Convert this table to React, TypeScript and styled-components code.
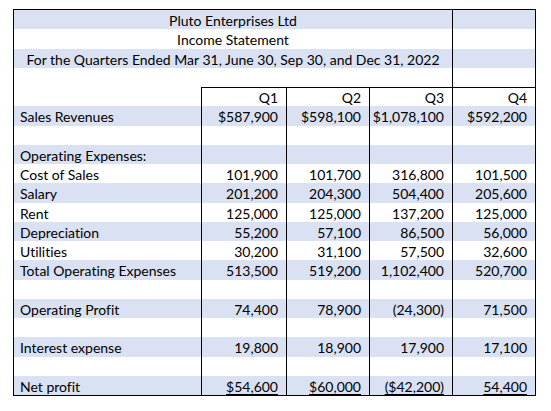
import React from "react";
import styled, { createGlobalStyle } from "styled-components";

const GlobalStyle = createGlobalStyle`
  html, body {
    margin: 0;
    padding: 0;
    background: #ffffff;
  }
  body {
    font-family: "Lato", "Open Sans", sans-serif;
    color: #000000;
  }
`;

const titles = [
  "Pluto Enterprises Ltd",
  "Income Statement",
  "For the Quarters Ended Mar 31, June 30, Sep 30, and Dec 31, 2022",
  "",
];

type Line = {
  label: string;
  values: string[];
  kind?: "head" | "total";
};

const lines: Line[] = [
  { label: "", values: ["Q1", "Q2", "Q3", "Q4"], kind: "head" },
  { label: "Sales Revenues", values: ["$587,900", "$598,100", "$1,078,100", "$592,200"] },
  { label: "", values: ["", "", "", ""] },
  { label: "Operating Expenses:", values: ["", "", "", ""] },
  { label: "Cost of Sales", values: ["101,900", "101,700", "316,800", "101,500"] },
  { label: "Salary", values: ["201,200", "204,300", "504,400", "205,600"] },
  { label: "Rent", values: ["125,000", "125,000", "137,200", "125,000"] },
  { label: "Depreciation", values: ["55,200", "57,100", "86,500", "56,000"] },
  { label: "Utilities", values: ["30,200", "31,100", "57,500", "32,600"] },
  { label: "Total Operating Expenses", values: ["513,500", "519,200", "1,102,400", "520,700"] },
  { label: "", values: ["", "", "", ""] },
  { label: "Operating Profit", values: ["74,400", "78,900", "(24,300)", "71,500"] },
  { label: "", values: ["", "", "", ""] },
  { label: "Interest expense", values: ["19,800", "18,900", "17,900", "17,100"] },
  { label: "", values: ["", "", "", ""] },
  { label: "Net profit", values: ["$54,600", "$60,000", "($42,200)", "54,400"], kind: "total" },
];

const App = () => {
  return (
    <>
      <GlobalStyle />
      <Sheet>
        {titles.map((t, i) => (
          <Row key={"t" + i} $shade={i % 2 === 0}>
            <TitleCell>{t}</TitleCell>
            <Cell $ruled />
          </Row>
        ))}
        {lines.map((line, i) => (
          <Row key={"l" + i} $shade={i % 2 === 1}>
            <Label>{line.label}</Label>
            {line.values.map((v, j) => (
              <Cell key={j} $ruled $top={line.kind === "head"}>
                {line.kind === "total" ? <Double>{v}</Double> : v}
              </Cell>
            ))}
          </Row>
        ))}
      </Sheet>
    </>
  );
};

export default App;

const Sheet = styled.div`
  width: 521px;
  margin: 9px 0 0 13px;
  border: 1px solid #000;
  display: flex;
  flex-direction: column;
`;

const Row = styled.div<{ $shade?: boolean }>`
  display: grid;
  grid-template-columns: 187px 85px 83px 83px 83px;
  height: 19.25px;
  background: ${(p) => (p.$shade ? "#d9e1f2" : "#ffffff")};
  font-size: 14px;
  line-height: 19px;
  font-feature-settings: "liga" 0;
`;

const TitleCell = styled.div`
  grid-column: span 4;
  padding-top: 1px;
  text-align: center;
  white-space: nowrap;
`;

const Label = styled.div`
  padding: 1px 0 0 6px;
  white-space: nowrap;
`;

const Cell = styled.div<{ $ruled?: boolean; $top?: boolean }>`
  box-sizing: border-box;
  border-left: ${(p) => (p.$ruled ? "1px solid #000" : "none")};
  border-top: ${(p) => (p.$top ? "1px solid #000" : "none")};
  padding: ${(p) => (p.$top ? "0" : "1px")} 8px 0 0;
  text-align: right;
  white-space: nowrap;
`;

const Double = styled.span`
  text-decoration: underline double;
  text-underline-offset: 2px;
`;
